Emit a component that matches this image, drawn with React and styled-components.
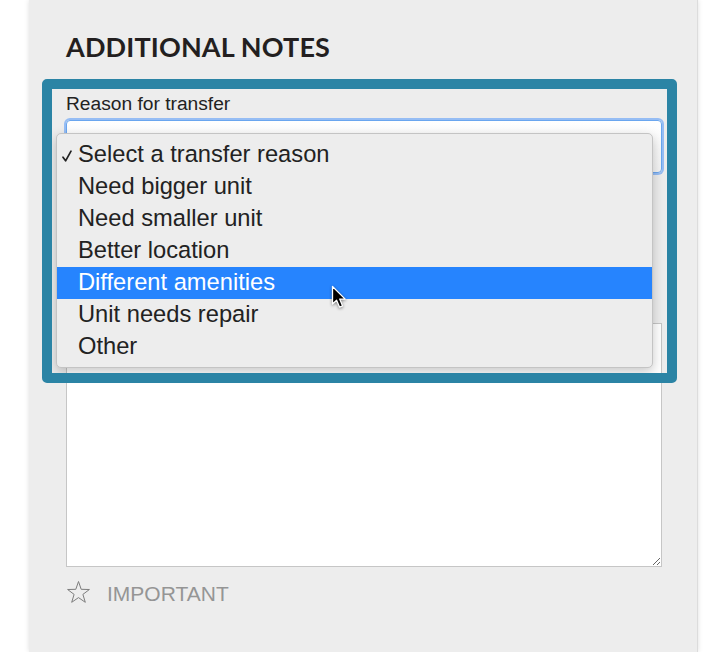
import React from 'react';
import styled, { createGlobalStyle, css } from 'styled-components';

const reasons = [
  'Select a transfer reason',
  'Need bigger unit',
  'Need smaller unit',
  'Better location',
  'Different amenities',
  'Unit needs repair',
  'Other',
];

const SELECTED = 0;
const HOVERED = 4;

function Check() {
  return (
    <CheckMark width="10" height="12" viewBox="0 0 10 12">
      <path d="M1 7.2 L3.6 10.8 L9 1.2" fill="none" stroke="#222" strokeWidth="1.7" strokeLinecap="round" strokeLinejoin="round" />
    </CheckMark>
  );
}

function Star() {
  return (
    <svg width="25" height="24" viewBox="0 0 24 24">
      <polygon
        points="12,1.5 14.7,9.3 22.9,9.5 16.4,14.4 18.8,22.3 12,17.6 5.2,22.3 7.6,14.4 1.1,9.5 9.3,9.3"
        fill="none"
        stroke="#7d7d7d"
        strokeWidth="1"
      />
    </svg>
  );
}

function Cursor() {
  return (
    <Pointer width="18" height="26" viewBox="0 0 18 26">
      <path
        d="M1.5 1.5 L1.5 19 L5.6 15.2 L8.6 22.2 L11.6 20.9 L8.7 14.1 L14.2 14.1 Z"
        fill="#000"
        stroke="#fff"
        strokeWidth="1.3"
        strokeLinejoin="round"
      />
    </Pointer>
  );
}

export default function App() {
  return (
    <>
      <GlobalStyle />
      <Page>
        <Panel>
          <Heading>ADDITIONAL NOTES</Heading>
          <Label>Reason for transfer</Label>
          <SelectField>
            <SelectBox />
            <Menu>
              {reasons.map((r, i) => (
                <Option key={r} active={i === HOVERED}>
                  {i === SELECTED && <Check />}
                  {r}
                  {i === HOVERED && <Cursor />}
                </Option>
              ))}
            </Menu>
          </SelectField>
          <Notes readOnly defaultValue="" />
          <Flag>
            <Star />
            <FlagText>IMPORTANT</FlagText>
          </Flag>

          {/* annotation frame drawn over the form */}
          <Highlight />
        </Panel>
      </Page>
    </>
  );
}

const GlobalStyle = createGlobalStyle`
  html, body {
    margin: 0;
    padding: 0;
    background: #fff;
    overflow: hidden;
  }
  body {
    font-family: "Liberation Sans", Helvetica, Arial, sans-serif;
    color: #222;
  }
`;

const Page = styled.div`
  padding-left: 29px;
  height: 652px;
`;

const Panel = styled.div`
  position: relative;
  box-sizing: border-box;
  width: 669px;
  height: 652px;
  padding: 33px 36px 0 37px;
  background: #ededed;
  border-right: 1px solid #dcdcdc;
  box-shadow: 0 0 5px rgba(0, 0, 0, 0.13);
`;

const Heading = styled.h2`
  margin: 0;
  font-family: Lato, "Open Sans", sans-serif;
  font-weight: 700;
  font-size: 27px;
  line-height: 27px;
  letter-spacing: 0.15px;
  color: #231f20;
`;

const Label = styled.div`
  margin-top: 34px;
  font-size: 19.2px;
  line-height: 19px;
  color: #222;
`;

const SelectField = styled.div`
  position: relative;
  margin-top: 7px;
`;

const SelectBox = styled.div`
  box-sizing: border-box;
  width: 596px;
  height: 53px;
  border: 1px solid #6aa6ef;
  border-radius: 4px;
  background: linear-gradient(#fff, #f3f3f3);
  box-shadow: 0 0 0 2px rgba(120, 172, 245, 0.75);
`;

const Menu = styled.ul`
  position: absolute;
  left: -10px;
  top: 13px;
  z-index: 2;
  box-sizing: border-box;
  width: 597px;
  margin: 0;
  padding: 4.5px 0 4px;
  list-style: none;
  background: #ededed;
  border: 0.5px solid #c4c4c4;
  border-radius: 5px;
  box-shadow: 0 4px 12px rgba(0, 0, 0, 0.22);
`;

const Option = styled.li`
  position: relative;
  height: 32px;
  padding-left: 21px;
  font-size: 23.7px;
  line-height: 30px;
  color: #222;
  white-space: nowrap;

  ${({ active }) =>
    active &&
    css`
      background: #2684fe;
      color: #fff;
    `}
`;

const CheckMark = styled.svg`
  position: absolute;
  left: 5px;
  top: 11px;
`;

const Pointer = styled.svg`
  position: absolute;
  left: 274px;
  top: 18px;
  filter: drop-shadow(0 1px 1.5px rgba(0, 0, 0, 0.45));
`;

const Notes = styled.textarea`
  display: block;
  box-sizing: border-box;
  margin: 150px 0 0;
  width: 596px;
  height: 244px;
  border: 1px solid #c6c6c6;
  border-radius: 0;
  background: #fff;
  outline: none;
  resize: both;
`;

const Flag = styled.div`
  display: flex;
  align-items: flex-start;
  gap: 16px;
  margin-top: 13px;
`;

const FlagText = styled.span`
  padding-top: 2px;
  font-size: 21px;
  line-height: 24px;
  color: #959595;
`;

const Highlight = styled.div`
  position: absolute;
  left: 13px;
  top: 79px;
  z-index: 3;
  box-sizing: border-box;
  width: 635px;
  height: 304px;
  border: 10px solid #2b84a5;
  border-radius: 5px;
  pointer-events: none;
`;
